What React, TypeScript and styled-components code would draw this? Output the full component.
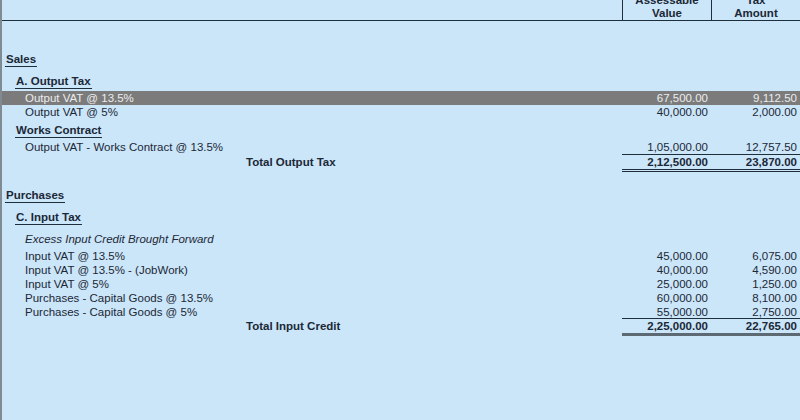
import React from "react";
import styled, { createGlobalStyle, css } from "styled-components";

const Global = createGlobalStyle`
  html, body { margin: 0; padding: 0; }
  body {
    width: 800px; height: 420px; overflow: hidden;
    background: #cbe5f9;
    font-family: "Liberation Sans", Arial, sans-serif;
    color: #1b2836;
  }
`;

const Page = styled.div`
  width: 800px;
  height: 420px;
  box-sizing: border-box;
  border-left: 2px solid #7f8a92;
  background: #cbe5f9;
  overflow: hidden;
  font-size: 11.5px;
`;

const Header = styled.div`
  display: grid;
  grid-template-columns: 1fr 89px 89px;
  height: 20px;
  border-bottom: 1px solid #1e2e3a;
  overflow: hidden;
`;

const HeadCell = styled.div`
  border-left: 1px solid #1e2e3a;
  display: flex;
  flex-direction: column;
  justify-content: flex-end;
  align-items: center;
  font-weight: bold;
  line-height: 13px;
  font-size: 11.5px;
  height: 20px;
`;

const HeadLine = styled.span`
  flex-shrink: 0;
  display: block;
  height: 13px;
`;

const Body = styled.div`
  display: flex;
  flex-direction: column;
`;

const Row = styled.div<{ $mt?: number; $hl?: boolean }>`
  display: grid;
  grid-template-columns: 1fr 89px 89px;
  height: 14px;
  line-height: 14px;
  margin-top: ${(p) => p.$mt ?? 0}px;
  ${(p) =>
    p.$hl &&
    css`
      background: #7b7b7b;
      color: #ececec;
    `}
`;

const Label = styled.div<{ $indent: number; $bold?: boolean; $italic?: boolean }>`
  padding-left: ${(p) => p.$indent}px;
  white-space: nowrap;
  font-weight: ${(p) => (p.$bold ? "bold" : "normal")};
  font-style: ${(p) => (p.$italic ? "italic" : "normal")};
`;

const Num = styled.div<{ $bold?: boolean; $top?: boolean; $bottom?: "double" | "thick" }>`
  text-align: right;
  padding-right: 3px;
  font-weight: ${(p) => (p.$bold ? "bold" : "normal")};
  ${(p) => p.$top && css`border-top: 1px solid #1e2e3a; margin-top: -1px;`}
  ${(p) => p.$bottom === "double" && css`border-bottom: 3px double #1e2e3a;`}
  ${(p) => p.$bottom === "thick" && css`border-bottom: 3px solid #5d6a74;`}
`;

const HeadingRow = styled.div<{ $mt: number; $indent: number }>`
  margin-top: ${(p) => p.$mt}px;
  padding-left: ${(p) => p.$indent}px;
  height: 14px;
`;

const Heading = styled.span`
  display: inline-block;
  font-weight: bold;
  line-height: 13px;
  padding: 0 1px;
  border-bottom: 1px solid #1e2e3a;
`;

type Item = { label: string; v: string; t: string };

const Entry = ({ item, mt, hl }: { item: Item; mt?: number; hl?: boolean }) => (
  <Row $mt={mt} $hl={hl}>
    <Label $indent={23}>{item.label}</Label>
    <Num>{item.v}</Num>
    <Num>{item.t}</Num>
  </Row>
);

const inputs: Item[] = [
  { label: "Input VAT @ 13.5%", v: "45,000.00", t: "6,075.00" },
  { label: "Input VAT @ 13.5% - (JobWork)", v: "40,000.00", t: "4,590.00" },
  { label: "Input VAT @ 5%", v: "25,000.00", t: "1,250.00" },
  { label: "Purchases - Capital Goods @ 13.5%", v: "60,000.00", t: "8,100.00" },
  { label: "Purchases - Capital Goods @ 5%", v: "55,000.00", t: "2,750.00" },
];

export default function App() {
  return (
    <>
      <Global />
      <Page>
        <Header>
          <div />
          <HeadCell>
            <HeadLine>Assessable</HeadLine>
            <HeadLine>Value</HeadLine>
          </HeadCell>
          <HeadCell>
            <HeadLine>Tax</HeadLine>
            <HeadLine>Amount</HeadLine>
          </HeadCell>
        </Header>
        <Body>
          <HeadingRow $mt={32} $indent={3}>
            <Heading>Sales</Heading>
          </HeadingRow>
          <HeadingRow $mt={8} $indent={13}>
            <Heading>A. Output Tax</Heading>
          </HeadingRow>
          <Entry mt={2} hl item={{ label: "Output VAT @ 13.5%", v: "67,500.00", t: "9,112.50" }} />
          <Entry item={{ label: "Output VAT @ 5%", v: "40,000.00", t: "2,000.00" }} />
          <HeadingRow $mt={5} $indent={13}>
            <Heading>Works Contract</Heading>
          </HeadingRow>
          <Entry mt={2} item={{ label: "Output VAT - Works Contract @ 13.5%", v: "1,05,000.00", t: "12,757.50" }} />
          <Row $mt={1}>
            <Label $indent={244} $bold>Total Output Tax</Label>
            <Num $bold $top $bottom="double">2,12,500.00</Num>
            <Num $bold $top $bottom="double">23,870.00</Num>
          </Row>
          <HeadingRow $mt={20} $indent={3}>
            <Heading>Purchases</Heading>
          </HeadingRow>
          <HeadingRow $mt={8} $indent={13}>
            <Heading>C. Input Tax</Heading>
          </HeadingRow>
          <Row $mt={7}>
            <Label $indent={23} $italic>Excess Input Credit Brought Forward</Label>
            <div />
            <div />
          </Row>
          {inputs.map((it, i) => (
            <Entry key={it.label} mt={i === 0 ? 3 : 0} item={it} />
          ))}
          <Row $mt={0}>
            <Label $indent={244} $bold>Total Input Credit</Label>
            <Num $bold $top $bottom="thick">2,25,000.00</Num>
            <Num $bold $top $bottom="thick">22,765.00</Num>
          </Row>
        </Body>
      </Page>
    </>
  );
}
